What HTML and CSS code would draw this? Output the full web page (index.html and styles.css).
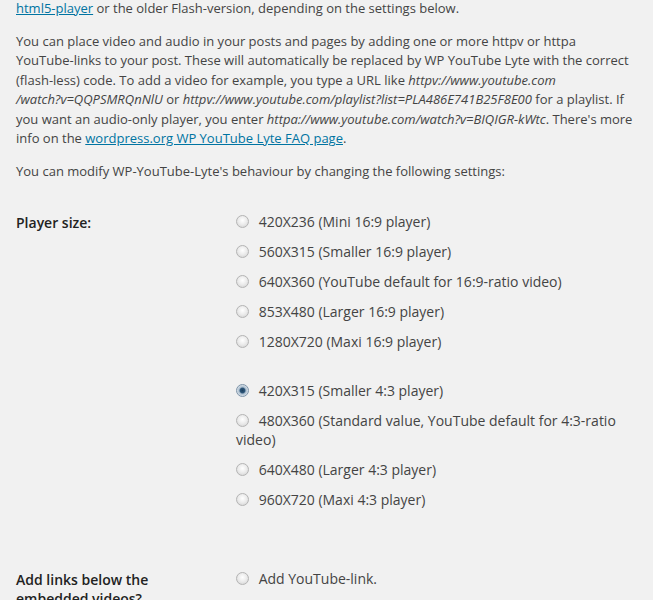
FILE: index.html
```html
<!DOCTYPE html>
<html lang="en">
<head>
  <meta charset="UTF-8">
  <meta name="viewport" content="width=device-width, initial-scale=1">
  <title>WP YouTube Lyte Settings</title>
  <link rel="stylesheet" href="styles.css">
</head>
<body>
  <div class="wrap">
    <p class="intro"><a href="#">html5-player</a> or the older Flash-version, depending on the settings below.</p>

    <p>You can place video and audio in your posts and pages by adding one or more httpv or httpa <span class="nowrap">YouTube-links</span> to your post. These will automatically be replaced by WP YouTube Lyte with the correct <span class="nowrap">(flash-less)</span> code. To add a video for example, you type a URL like <em>httpv://www.youtube.com<br>/watch?v=QQPSMRQnNlU</em> or <em>httpv://www.youtube.com/playlist?list=PLA486E741B25F8E00</em> for a playlist. If you want an <span class="nowrap">audio-only</span> player, you enter <em>httpa://www.youtube.com/watch?v=BIQIGR-kWtc</em>. There's more info on the <a href="#">wordpress.org WP YouTube Lyte FAQ page</a>.</p>

    <p>You can modify WP-YouTube-Lyte's behaviour by changing the following settings:</p>

    <div class="setting">
      <div class="setting-label">Player size:</div>
      <fieldset class="options">
        <div class="option-group">
          <label class="option"><input type="radio" name="size"> 420X236 (Mini 16:9 player)</label>
          <label class="option"><input type="radio" name="size"> 560X315 (Smaller 16:9 player)</label>
          <label class="option"><input type="radio" name="size"> 640X360 (YouTube default for 16:9-ratio video)</label>
          <label class="option"><input type="radio" name="size"> 853X480 (Larger 16:9 player)</label>
          <label class="option"><input type="radio" name="size"> 1280X720 (Maxi 16:9 player)</label>
        </div>
        <div class="option-group">
          <label class="option"><input type="radio" name="size" checked> 420X315 (Smaller 4:3 player)</label>
          <label class="option"><input type="radio" name="size"> 480X360 (Standard value, YouTube default for 4:3-ratio video)</label>
          <label class="option"><input type="radio" name="size"> 640X480 (Larger 4:3 player)</label>
          <label class="option"><input type="radio" name="size"> 960X720 (Maxi 4:3 player)</label>
        </div>
      </fieldset>
    </div>

    <div class="setting">
      <div class="setting-label">Add links below the embedded videos?</div>
      <fieldset class="options">
        <div class="option-group">
          <label class="option"><input type="radio" name="links"> Add YouTube-link.</label>
          <label class="option"><input type="radio" name="links"> Add YouTube-link and a link to download the audio.</label>
          <label class="option"><input type="radio" name="links"> Don't add any links.</label>
        </div>
      </fieldset>
    </div>
  </div>
</body>
</html>
```

FILE: styles.css
```css
html {
  background-color: #f1f1f1;
}

body {
  font-family: "Open Sans", "Noto Sans", sans-serif;
  font-size: 13px;
  line-height: 1.5;
  color: #444;
  margin: 0;
  padding: 0 16px;
}

a {
  color: #0074a2;
  text-decoration: underline;
}

p {
  margin: 13px 0;
}

.intro {
  margin-top: -1px;
}

.nowrap {
  white-space: nowrap;
}

.setting {
  display: grid;
  grid-template-columns: 220px 1fr;
  margin-top: 31px;
}

.setting + .setting {
  margin-top: 49px;
}

.setting-label {
  font-size: 14px;
  font-weight: 600;
  line-height: 19px;
  color: #222;
  width: 160px;
  padding-top: 1px;
}

.options {
  border: none;
  margin: 0;
  padding: 0;
  min-width: 0;
}

.option-group + .option-group {
  margin-top: 29px;
}

.option {
  display: block;
  font-size: 14px;
  line-height: 19.5px;
  margin-bottom: 10.5px;
}

.option input {
  -webkit-appearance: none;
  appearance: none;
  display: inline-block;
  width: 13px;
  height: 13px;
  margin: 0 6px 0 0;
  border: 1px solid #b4b4b4;
  border-radius: 50%;
  background: radial-gradient(circle at 50% 40%, #ffffff 0%, #ebebeb 50%, #cfcfcf 100%);
  vertical-align: -1px;
  box-sizing: border-box;
}

.option input:checked {
  border-color: #7d93a8;
  background: radial-gradient(circle, #1d3f5e 0%, #2d5679 30%, #a9bccd 45%, #e9eef2 80%);
}
```
